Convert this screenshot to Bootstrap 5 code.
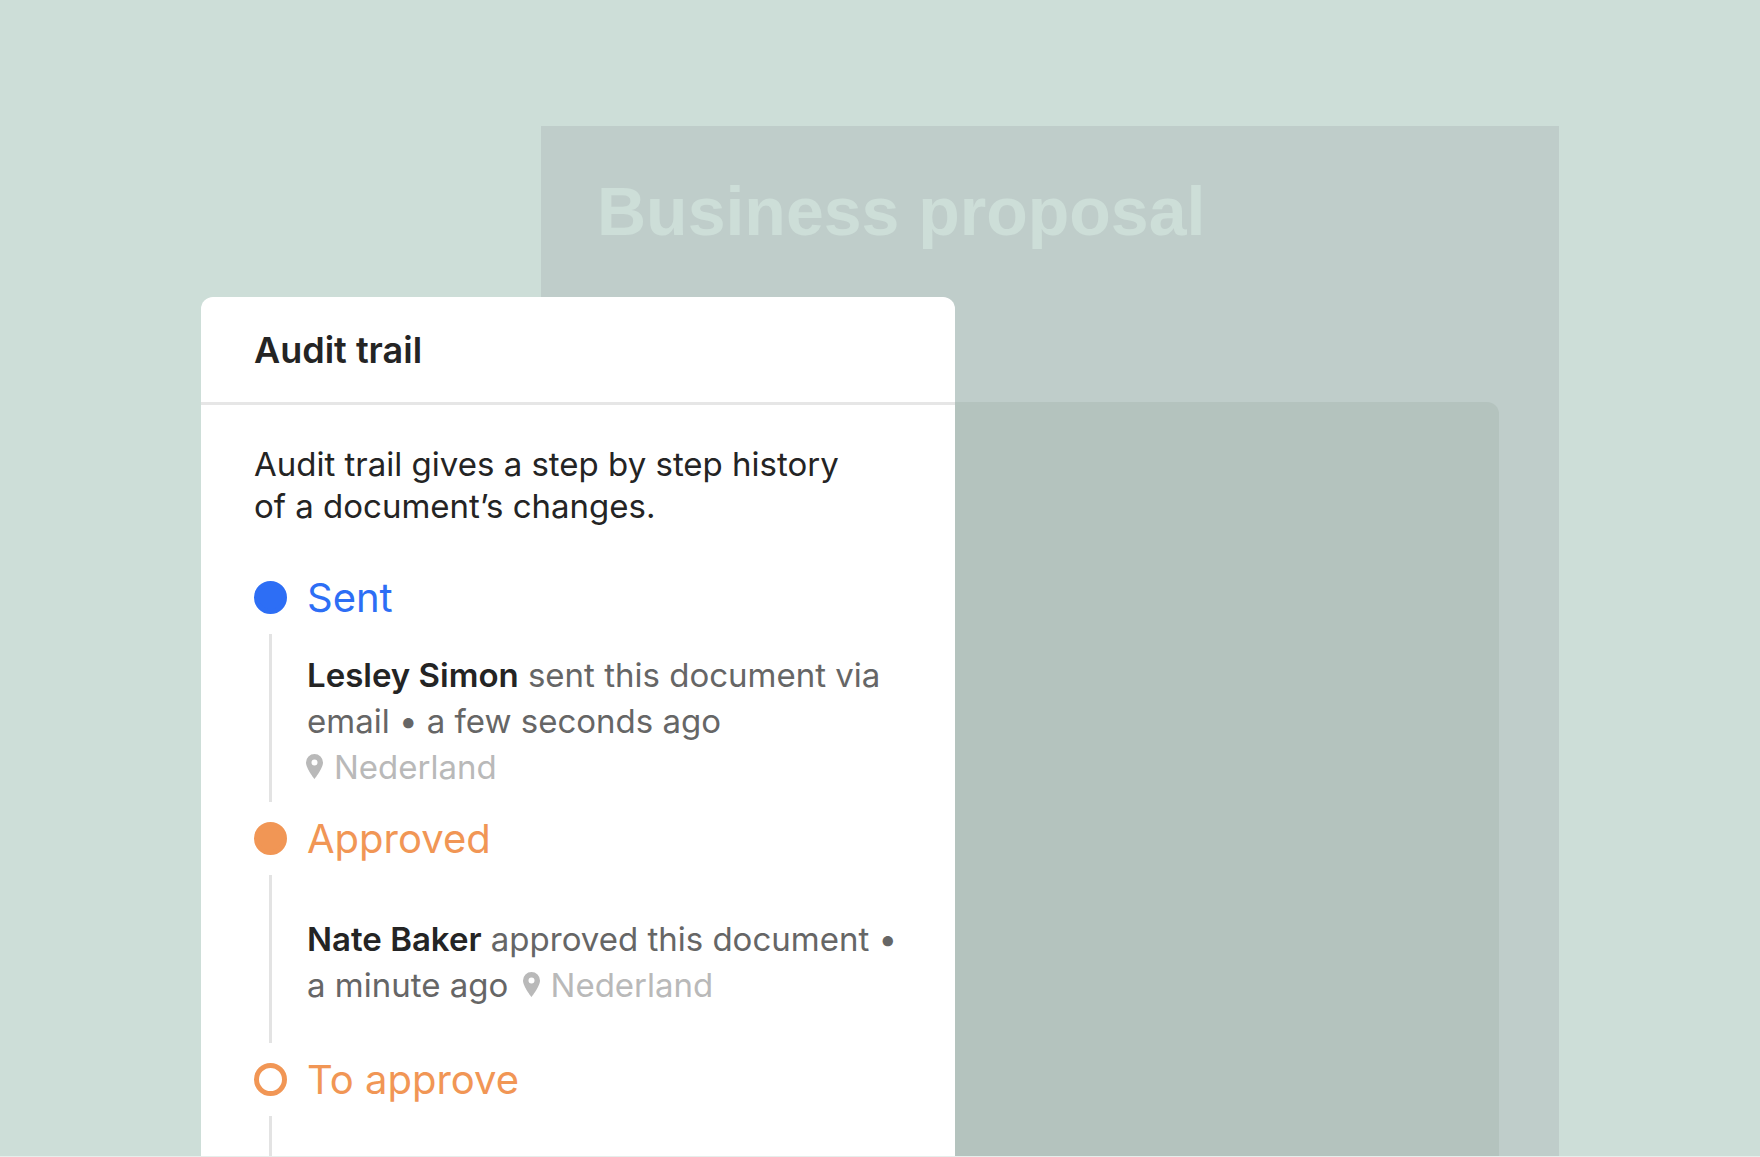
<!DOCTYPE html>
<html lang="en">
<head>
<meta charset="utf-8">
<meta name="viewport" content="width=device-width, initial-scale=1">
<title>Audit trail</title>
<link href="https://cdn.jsdelivr.net/npm/bootstrap@5.3.0/dist/css/bootstrap.min.css" rel="stylesheet">
<style>
  body { font-family: Inter, "Liberation Sans", sans-serif; color: #242424; background: #e6eeeb; }
  .stage {
    display: grid;
    grid-template-columns: 201fr 340fr 414fr 604fr 201fr;
    grid-template-rows: 126px 171px 1fr;
    height: calc(100vh - 1px);
    background: #cdded8;
  }
  .proposal { grid-area: 2 / 3 / 4 / 5; background: #bfcdca; padding: 45px 60px 0 56px; }
  .proposal-title { font: bold 68px/80px "Liberation Sans", sans-serif; color: #cdded8; }
  .proposal-body { background: #b4c3be; border-top-right-radius: 12px; margin-top: 151px; }
  .trail { grid-area: 3 / 2 / 4 / 4; z-index: 1; border-radius: 12px 12px 0 0; }
  .trail-head { height: 108px; padding: 0 53px; border-bottom: 3px solid #e6e6e6; }
  .trail-title { font-size: 36px; line-height: 42px; font-weight: 600; }
  .trail-main { padding: 38px 48px 0 53px; font-size: 33px; }
  .intro { line-height: 42px; margin-bottom: 54px; }
  .step-row { display: grid; grid-template-columns: 33px 1fr; column-gap: 20px; }
  .dot { width: 33px; height: 33px; border-radius: 50%; border: 5px solid currentColor; }
  .dot-full { background: currentColor; }
  .step-name { font-size: 40px; line-height: 34px; height: 33px; font-weight: 400; }
  .rail { width: 3px; height: 168px; margin: 20px auto; background: #e3e3e3; }
  .step-text { line-height: 46px; padding-top: 6px; color: #666; }
  .step-text b { font-weight: 600; color: #242424; }
  .blue { color: #2d6ef5; }
  .orange { color: #f19655; }
  .place { color: #b9b9b9; }
  .pin { width: 17px; height: 25px; margin: -8px 11px 0 -1px; }
  .pin-inline { margin-left: 5px; }
</style>
</head>
<body>
<main class="stage overflow-hidden">
  <section class="proposal d-flex flex-column">
    <h1 class="proposal-title m-0 text-nowrap">Business proposal</h1>
    <div class="proposal-body flex-grow-1"></div>
  </section>

  <section class="trail bg-white overflow-hidden">
    <header class="trail-head d-flex align-items-center">
      <h2 class="trail-title m-0">Audit trail</h2>
    </header>
    <div class="trail-main text-nowrap">
      <p class="intro">Audit trail gives a step by step history<br>of a document’s changes.</p>
      <ol class="list-unstyled m-0">
        <li class="step-row">
          <span class="dot dot-full blue"></span>
          <h3 class="step-name blue m-0">Sent</h3>
          <span class="rail"></span>
          <p class="step-text m-0 align-self-center"><b>Lesley Simon</b> sent this document via<br>email • a few seconds ago<br><span class="place"><svg class="pin" viewBox="0 0 17 25" fill="currentColor" aria-hidden="true"><path fill-rule="evenodd" d="M8.500 0A8.500 8.500 0 0 0 0 8.500C0 14.500 8.500 25 8.500 25S17 14.500 17 8.500A8.500 8.500 0 0 0 8.500 0Zm0 5.500a3 3 0 1 1 0 6 3 3 0 0 1 0-6Z"/></svg>Nederland</span></p>
        </li>
        <li class="step-row">
          <span class="dot dot-full orange"></span>
          <h3 class="step-name orange m-0">Approved</h3>
          <span class="rail"></span>
          <p class="step-text m-0 align-self-center"><b>Nate Baker</b> approved this document •<br>a minute ago <span class="place"><svg class="pin pin-inline" viewBox="0 0 17 25" fill="currentColor" aria-hidden="true"><path fill-rule="evenodd" d="M8.500 0A8.500 8.500 0 0 0 0 8.500C0 14.500 8.500 25 8.500 25S17 14.500 17 8.500A8.500 8.500 0 0 0 8.500 0Zm0 5.500a3 3 0 1 1 0 6 3 3 0 0 1 0-6Z"/></svg>Nederland</span></p>
        </li>
        <li class="step-row">
          <span class="dot orange"></span>
          <h3 class="step-name orange m-0">To approve</h3>
          <span class="rail"></span>
        </li>
      </ol>
    </div>
  </section>
</main>
<script src="https://cdn.jsdelivr.net/npm/bootstrap@5.3.0/dist/js/bootstrap.bundle.min.js"></script>
</body>
</html>
